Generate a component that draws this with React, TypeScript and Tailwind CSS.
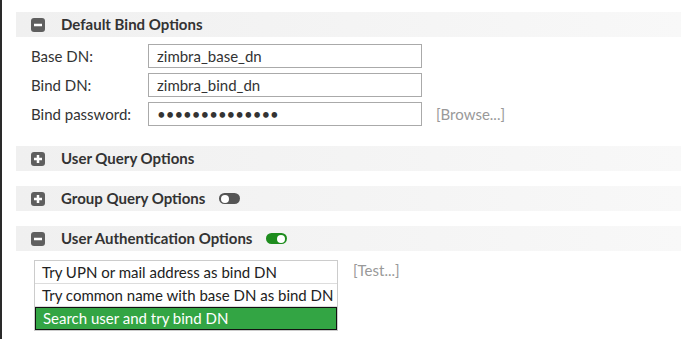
import { useState } from 'react';

type Section = {
  title: string;
  open: boolean;
  toggle?: 'on' | 'off';
};

function SquareIcon({ open }: { open: boolean }) {
  return (
    <svg width="14" height="14" viewBox="0 0 14 14" className="shrink-0">
      <rect x="0" y="0" width="14" height="14" rx="3" fill="#5f5f5f" />
      <rect x="3" y="5.75" width="8" height="2.5" fill="#fff" />
      {!open && <rect x="5.75" y="3" width="2.5" height="8" fill="#fff" />}
    </svg>
  );
}

function Toggle({ on }: { on: boolean }) {
  return (
    <span
      className={
        'relative inline-block h-[11px] w-[21px] rounded-full ' +
        (on ? 'bg-[#1e8c1e]' : 'bg-[#555]')
      }
    >
      <span
        className={
          'absolute top-[1.5px] h-[8px] w-[8px] rounded-full bg-white ' +
          (on ? 'right-[2px]' : 'left-[2px]')
        }
      />
    </span>
  );
}

function Header({ s }: { s: Section }) {
  return (
    <div className="flex h-[25px] items-center bg-gradient-to-r from-[#f0f0f0] to-[#f8f8f8] pl-[15px]">
      <SquareIcon open={s.open} />
      <span className="ml-[16px] text-[15px] font-bold text-[#333]">{s.title}</span>
      {s.toggle && (
        <span className="ml-[14px] flex items-center">
          <Toggle on={s.toggle === 'on'} />
        </span>
      )}
    </div>
  );
}

function Field({ label, value, password }: { label: string; value: string; password?: boolean }) {
  return (
    <div className="flex h-[24px] items-center">
      <label className="w-[117px] text-[15px] text-[#333]">{label}</label>
      <input
        type={password ? 'password' : 'text'}
        defaultValue={value}
        className="h-[24px] w-[274px] border border-[#aaa] bg-white px-[8px] text-[15px] text-[#333] outline-none"
      />
    </div>
  );
}

const authModes = [
  'Try UPN or mail address as bind DN',
  'Try common name with base DN as bind DN',
  'Search user and try bind DN',
];

export default function App() {
  const [mode, setMode] = useState(2);

  return (
    <div
      className="h-[339px] w-[681px] overflow-hidden border-l-[2px] border-[#2a2a2a] bg-white"
      style={{ fontFamily: 'Lato, "Open Sans", sans-serif' }}
    >
      <div className="pl-[14px] pt-[12px]">
        <Header s={{ title: 'Default Bind Options', open: true }} />

        <div className="flex flex-col gap-[5px] pl-[15px] pt-[7px]">
          <Field label="Base DN:" value="zimbra_base_dn" />
          <Field label="Bind DN:" value="zimbra_bind_dn" />
          <div className="flex items-center">
            <Field label="Bind password:" value="zimbrapassword" password />
            <span className="ml-[14px] text-[15px] text-[#999]">[Browse...]</span>
          </div>
        </div>

        <div className="mt-[20px] flex flex-col gap-[15px]">
          <Header s={{ title: 'User Query Options', open: false }} />
          <Header s={{ title: 'Group Query Options', open: false, toggle: 'off' }} />
          <Header s={{ title: 'User Authentication Options', open: true, toggle: 'on' }} />
        </div>

        <div className="flex items-start pl-[18px] pt-[9px]">
          <ul className="w-[304px] shrink-0 border border-[#ccc] text-[15px]">
            {authModes.map((m, i) => (
              <li
                key={m}
                onClick={() => setMode(i)}
                className={
                  'flex h-[23px] items-center whitespace-nowrap pl-[7px] ' +
                  (i === mode
                    ? 'border border-[#111] bg-[#33a544] text-white'
                    : 'border-b border-[#ddd] text-[#222]')
                }
              >
                {m}
              </li>
            ))}
          </ul>
          <span className="ml-[15px] mt-[-1px] text-[15px] text-[#999]">[Test...]</span>
        </div>
      </div>
    </div>
  );
}
